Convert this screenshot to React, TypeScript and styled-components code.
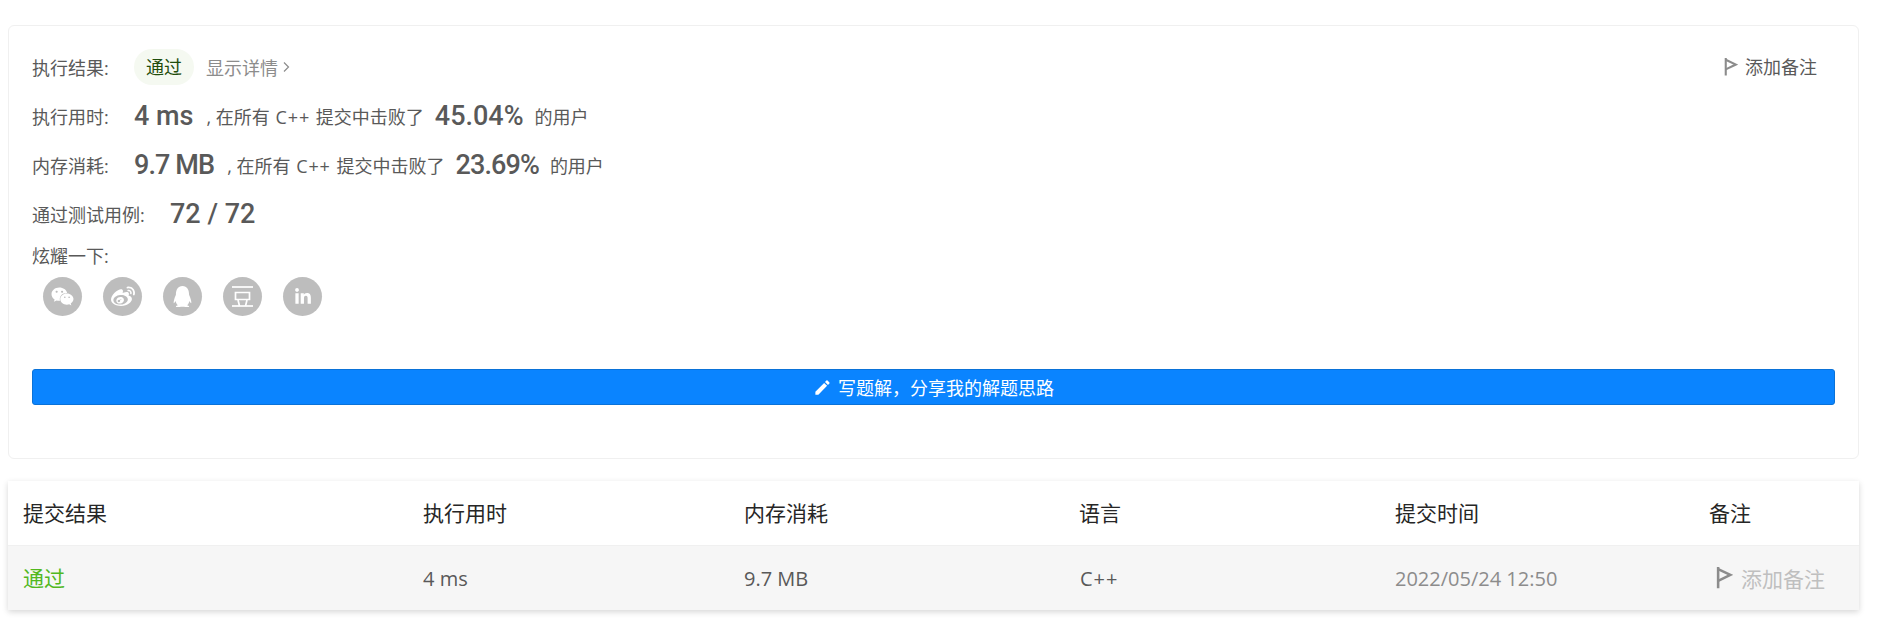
import { ReactNode } from 'react'
import styled, { createGlobalStyle } from 'styled-components'
import { FaLinkedinIn, FaQq, FaWeibo, FaWeixin } from 'react-icons/fa'
import { MdEdit } from 'react-icons/md'

const GlobalStyle = createGlobalStyle`
  html, body {
    margin: 0;
    background: #ffffff;
  }
  body {
    font-family: 'Open Sans', 'Noto Sans CJK SC', sans-serif;
    color: #595959;
  }
`

const FlagIcon = ({ size }: { size: number }) => (
  <svg width={size} height={size * 1.25} viewBox="0 0 16 20" fill="none" stroke="#8c8c8c" strokeWidth="2.4">
    <path d="M2 0v20" />
    <path d="M2 2l11.5 5.5L2 13" />
  </svg>
)

const DoubanIcon = () => (
  <svg width="21" height="21" viewBox="0 0 21 21" fill="none" stroke="#ffffff" strokeWidth="1.7">
    <path d="M0 1h21" />
    <path d="M3.5 6.5h14v7h-14z" />
    <path d="M6 14l1.5 6M15 14l-1.5 6" />
    <path d="M0 20h21" />
  </svg>
)

const shareIcons: ReactNode[] = [
  <FaWeixin key="wechat" size={23} />,
  <FaWeibo key="weibo" size={24} />,
  <FaQq key="qq" size={21} />,
  <DoubanIcon key="douban" />,
  <FaLinkedinIn key="linkedin" size={18} />,
]

const columns = ['提交结果', '执行用时', '内存消耗', '语言', '提交时间', '备注']

export default function App() {
  return (
    <Page>
      <GlobalStyle />
      <ResultCard>
        <NoteButton>
          <FlagIcon size={14} />
          添加备注
        </NoteButton>
        <Row>
          <Label>执行结果:</Label>
          <StatusPill>通过</StatusPill>
          <DetailLink>
            显示详情
            <svg width="7" height="12" viewBox="0 0 7 12" fill="none" stroke="#8c8c8c" strokeWidth="1.2">
              <path d="M1 1.5L5.5 6 1 10.5" />
            </svg>
          </DetailLink>
        </Row>
        <Row>
          <Label>执行用时:</Label>
          <Metric>4 ms</Metric>
          <BeatNote>, 在所有 <Lang>C++</Lang> 提交中击败了</BeatNote>
          <Metric>45.04%</Metric>
          <Note>的用户</Note>
        </Row>
        <Row>
          <Label>内存消耗:</Label>
          <Metric $tight>9.7 MB</Metric>
          <BeatNote>, 在所有 <Lang>C++</Lang> 提交中击败了</BeatNote>
          <Metric $tight>23.69%</Metric>
          <Note>的用户</Note>
        </Row>
        <Row>
          <Label $wide>通过测试用例:</Label>
          <Metric>72 / 72</Metric>
        </Row>
        <ShareLabel>炫耀一下:</ShareLabel>
        <ShareRow>
          {shareIcons.map((icon, i) => (
            <ShareCircle key={i}>{icon}</ShareCircle>
          ))}
        </ShareRow>
        <WriteButton>
          <MdEdit size={19} />
          写题解，分享我的解题思路
        </WriteButton>
      </ResultCard>
      <SubmissionTable>
        <HeaderRow>
          {columns.map((column) => (
            <HeaderCell key={column}>{column}</HeaderCell>
          ))}
        </HeaderRow>
        <BodyRow>
          <PassedCell>通过</PassedCell>
          <Cell>4 ms</Cell>
          <Cell>9.7 MB</Cell>
          <Cell><Lang>C++</Lang></Cell>
          <TimeCell>2022/05/24 12:50</TimeCell>
          <AddNote>
            <FlagIcon size={17} />
            添加备注
          </AddNote>
        </BodyRow>
      </SubmissionTable>
    </Page>
  )
}

const Page = styled.div`
  box-sizing: border-box;
  width: 1859px;
  height: 620px;
  padding: 25px 0 0 8px;
`

const ResultCard = styled.section`
  position: relative;
  box-sizing: border-box;
  height: 434px;
  padding: 23px 23px 0;
  border: 1px solid #f0f0f0;
  border-radius: 6px;
  background: #ffffff;
`

const NoteButton = styled.div`
  position: absolute;
  top: 29px;
  right: 41px;
  display: flex;
  align-items: center;
  gap: 7px;
  font-size: 18px;
  line-height: 24px;
  color: #595959;
`

const Row = styled.div`
  display: flex;
  align-items: center;
  height: 36px;
  margin-bottom: 13px;
  font-size: 18px;
`

const Label = styled.div<{ $wide?: boolean }>`
  flex: none;
  width: ${(props) => (props.$wide ? '138px' : '102px')};
`

const StatusPill = styled.span`
  flex: none;
  height: 36px;
  padding: 0 12px;
  border-radius: 18px;
  line-height: 36px;
  background: #f5f9f1;
  color: #1f4d0c;
`

const DetailLink = styled.span`
  display: flex;
  align-items: center;
  gap: 5px;
  margin-left: 12px;
  color: #8c8c8c;
`

const Metric = styled.span<{ $tight?: boolean }>`
  flex: none;
  margin-right: 11px;
  font-family: Roboto, sans-serif;
  font-size: 27px;
  font-weight: 500;
  letter-spacing: ${(props) => (props.$tight ? '-0.9px' : '0')};
  color: #595959;
`

const Note = styled.span`
  flex: none;
  margin-right: 11px;
  font-size: 18px;
  color: #595959;
`

const BeatNote = styled(Note)`
  margin-left: 2px;
`

const Lang = styled.span`
  margin: 0 1px;
  letter-spacing: 0.05em;
`

const ShareLabel = styled.div`
  margin-top: -2px;
  font-size: 18px;
  line-height: 26px;
`

const ShareRow = styled.div`
  display: flex;
  gap: 21px;
  margin: 8px 0 0 11px;
`

const ShareCircle = styled.div`
  display: flex;
  align-items: center;
  justify-content: center;
  width: 39px;
  height: 39px;
  border-radius: 50%;
  background: #bdbdbd;
  color: #ffffff;
`

const WriteButton = styled.button`
  display: flex;
  align-items: center;
  justify-content: center;
  gap: 6px;
  box-sizing: border-box;
  width: 1803px;
  height: 36px;
  margin-top: 53px;
  padding: 0;
  border: 1px solid #0a72d8;
  border-radius: 3px;
  background: #0a84ff;
  color: #ffffff;
  font-family: inherit;
  font-size: 18px;
`

const SubmissionTable = styled.div`
  margin-top: 22px;
  background: #ffffff;
  box-shadow: 0 2px 6px rgba(0, 0, 0, 0.16);
`

const gridColumns = '400px 321px 335px 316px 314px 1fr'

const HeaderRow = styled.div`
  display: grid;
  grid-template-columns: ${gridColumns};
  align-items: center;
  height: 64px;
  border-bottom: 1px solid #f0f0f0;
`

const BodyRow = styled.div`
  display: grid;
  grid-template-columns: ${gridColumns};
  align-items: center;
  height: 64px;
  background: #f6f6f6;
`

const HeaderCell = styled.div`
  padding: 0 0 2px 15px;
  font-size: 21px;
  color: #262626;
`

const Cell = styled.div`
  padding-left: 15px;
  font-size: 20px;
  color: #595959;
`

const PassedCell = styled(Cell)`
  padding-bottom: 2px;
  font-size: 21px;
  color: #52b81f;
`

const TimeCell = styled(Cell)`
  color: #8c8c8c;
`

const AddNote = styled(Cell)`
  display: flex;
  align-items: center;
  gap: 8px;
  padding-left: 22px;
  font-size: 21px;
  color: #bfbfbf;
`
